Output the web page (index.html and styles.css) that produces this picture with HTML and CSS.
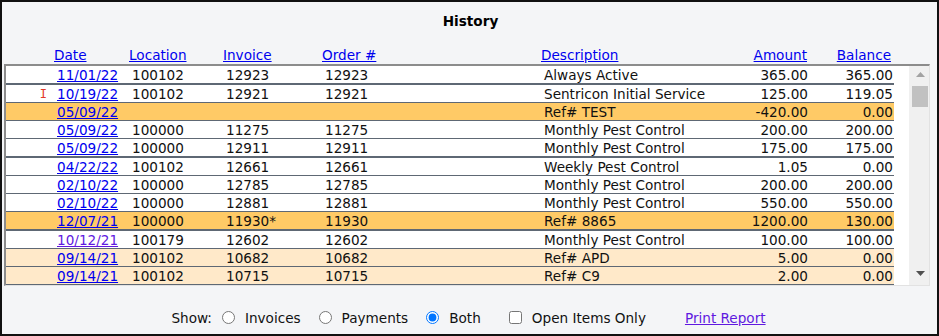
FILE: index.html
```html
<!DOCTYPE html>
<html lang="en">
  <head>
    <meta charset="UTF-8" />
    <title>History</title>
    <link rel="stylesheet" href="styles.css">
  </head>
  <body>
    <div class="panel">
      <h1>History</h1>

      <!-- column headers -->
      <div class="cols heads">
        <span></span>
        <a href="#">Date</a>
        <a href="#">Location</a>
        <a href="#">Invoice</a>
        <a href="#">Order #</a>
        <a href="#">Description</a>
        <a href="#" class="num">Amount</a>
        <a href="#" class="num">Balance</a>
      </div>

      <div class="box">
        <div class="scroll">
          <table class="hist">
            <colgroup>
              <col class="c-mark"><col class="c-date"><col class="c-loc"><col class="c-inv">
              <col class="c-ord"><col class="c-desc"><col class="c-amt"><col class="c-bal">
            </colgroup>
            <tr class="thick">
              <td></td><td><a href="#">11/01/22</a></td><td>100102</td><td>12923</td><td>12923</td>
              <td>Always Active</td><td class="num">365.00</td><td class="num last">365.00</td>
            </tr>
            <tr>
              <td class="mark">I</td><td><a href="#">10/19/22</a></td><td>100102</td><td>12921</td><td>12921</td>
              <td>Sentricon Initial Service</td><td class="num">125.00</td><td class="num last">119.05</td>
            </tr>
            <tr class="pay">
              <td></td><td><a href="#">05/09/22</a></td><td></td><td></td><td></td>
              <td>Ref# TEST</td><td class="num">-420.00</td><td class="num last">0.00</td>
            </tr>
            <tr>
              <td></td><td><a href="#">05/09/22</a></td><td>100000</td><td>11275</td><td>11275</td>
              <td>Monthly Pest Control</td><td class="num">200.00</td><td class="num last">200.00</td>
            </tr>
            <tr class="thick">
              <td></td><td><a href="#">05/09/22</a></td><td>100000</td><td>12911</td><td>12911</td>
              <td>Monthly Pest Control</td><td class="num">175.00</td><td class="num last">175.00</td>
            </tr>
            <tr>
              <td></td><td><a href="#">04/22/22</a></td><td>100102</td><td>12661</td><td>12661</td>
              <td>Weekly Pest Control</td><td class="num">1.05</td><td class="num last">0.00</td>
            </tr>
            <tr>
              <td></td><td><a href="#">02/10/22</a></td><td>100000</td><td>12785</td><td>12785</td>
              <td>Monthly Pest Control</td><td class="num">200.00</td><td class="num last">200.00</td>
            </tr>
            <tr>
              <td></td><td><a href="#">02/10/22</a></td><td>100000</td><td>12881</td><td>12881</td>
              <td>Monthly Pest Control</td><td class="num">550.00</td><td class="num last">550.00</td>
            </tr>
            <tr class="pay thick">
              <td></td><td><a href="#">12/07/21</a></td><td>100000</td><td>11930*</td><td>11930</td>
              <td>Ref# 8865</td><td class="num">1200.00</td><td class="num last">130.00</td>
            </tr>
            <tr>
              <td></td><td><a href="#" class="seen">10/12/21</a></td><td>100179</td><td>12602</td><td>12602</td>
              <td>Monthly Pest Control</td><td class="num">100.00</td><td class="num last">100.00</td>
            </tr>
            <tr class="open">
              <td></td><td><a href="#">09/14/21</a></td><td>100102</td><td>10682</td><td>10682</td>
              <td>Ref# APD</td><td class="num">5.00</td><td class="num last">0.00</td>
            </tr>
            <tr class="open">
              <td></td><td><a href="#">09/14/21</a></td><td>100102</td><td>10715</td><td>10715</td>
              <td>Ref# C9</td><td class="num">2.00</td><td class="num last">0.00</td>
            </tr>
          </table>
        </div>

        <!-- scrollbar -->
        <div class="bar">
          <div class="arrow up">
            <svg width="9" height="5" viewBox="0 0 9 5"><path d="M0 5 L4.5 0 L9 5 Z" fill="#a3a3a3"/></svg>
          </div>
          <div class="thumb"></div>
          <div class="track"></div>
          <div class="arrow down">
            <svg width="9" height="5" viewBox="0 0 9 5"><path d="M0 0 L4.5 5 L9 0 Z" fill="#505050"/></svg>
          </div>
        </div>
      </div>

      <div class="controls">
        <span>Show:</span>
        <label class="opt"><input type="radio" name="show"> Invoices</label>
        <label class="opt"><input type="radio" name="show"> Payments</label>
        <label class="opt"><input type="radio" name="show" checked> Both</label>
        <label class="opt check"><input type="checkbox"> Open Items Only</label>
        <a href="#" class="seen report">Print Report</a>
      </div>
    </div>
  </body>
</html>
```

FILE: styles.css
```css
* {
  box-sizing: border-box;
  margin: 0;
  padding: 0;
}

body {
  font-family: "DejaVu Sans", Verdana, sans-serif;
  font-size: 13.6px;
  color: #111;
  background: #f4f5f7;
}

.panel {
  width: 939px;
  height: 336px;
  border: 2px solid #111;
  background: #f4f5f7;
  padding-left: 2px;
  overflow: hidden;
}

h1 {
  font-size: 13.6px;
  font-weight: bold;
  text-align: center;
  line-height: 18px;
  margin-top: 10px;
  color: #000;
}

a {
  color: #0000ee;
}

a.seen {
  color: #6019e0;
}

/* header row uses the same widths as the table columns */
.cols {
  display: grid;
  grid-template-columns: 48px 75px 94px 99px 219px 189px 80px 84px;
}

.heads {
  margin-top: 16px;
  padding-left: 2px;
  line-height: 18px;
  height: 18px;
}

.heads .num {
  text-align: right;
  padding-right: 3px;
}

.box {
  display: flex;
  width: 926px;
  border-top: 2px solid #8c8c8c;
  border-left: 2px solid #8c8c8c;
  border-right: 1px solid #e2e2e2;
  border-bottom: 1px solid #e2e2e2;
}

.scroll {
  width: 903px;
  height: 219px;
  overflow: hidden;
  background: #fff;
}

.hist {
  width: 888px;
  table-layout: fixed;
  border-collapse: separate;
  border-spacing: 0;
}

.c-mark { width: 48px; }
.c-date { width: 75px; }
.c-loc { width: 94px; }
.c-inv { width: 99px; }
.c-ord { width: 219px; }
.c-desc { width: 189px; }
.c-amt { width: 80px; }
.c-bal { width: 84px; }

.hist td {
  line-height: 16px;
  height: 18px;
  padding: 1px 0 0 3px;
  border-bottom: 1px solid #5e6874;
  white-space: nowrap;
  vertical-align: middle;
}

.hist tr.thick td {
  border-bottom-width: 2px;
  height: 19px;
}

.hist td.num {
  text-align: right;
  padding: 1px 2px 0 0;
}

.hist td.last {
  padding-right: 1px;
}

.hist td.mark {
  text-align: right;
  padding-right: 7px;
  color: #e23a2a;
  font-family: "DejaVu Sans Mono", monospace;
  font-size: 12px;
}

.pay td {
  background: #ffca66;
}

.open td {
  background: #ffe9c9;
}

/* fake scrollbar */
.bar {
  width: 20px;
  height: 219px;
  background: #f0f0f0;
  display: flex;
  flex-direction: column;
}

.arrow {
  height: 16px;
  display: flex;
  align-items: center;
  justify-content: center;
  padding-left: 2px;
}

.arrow.down {
  margin-bottom: 4px;
}

.thumb {
  height: 21px;
  margin: 4px 1px 0 3px;
  background: #c1c1c1;
}

.track {
  flex: 1;
}

.controls {
  display: flex;
  justify-content: center;
  align-items: center;
  margin-top: 22px;
  height: 20px;
  padding-right: 4px;
}

.opt {
  display: inline-flex;
  align-items: center;
  margin-left: 10px;
}

.opt input {
  width: 13px;
  height: 13px;
  margin: 0 10px 2px 0;
}

.opt + .opt {
  margin-left: 18px;
}

.opt.check {
  margin-left: 28px;
}

.report {
  margin-left: 39px;
}
```
